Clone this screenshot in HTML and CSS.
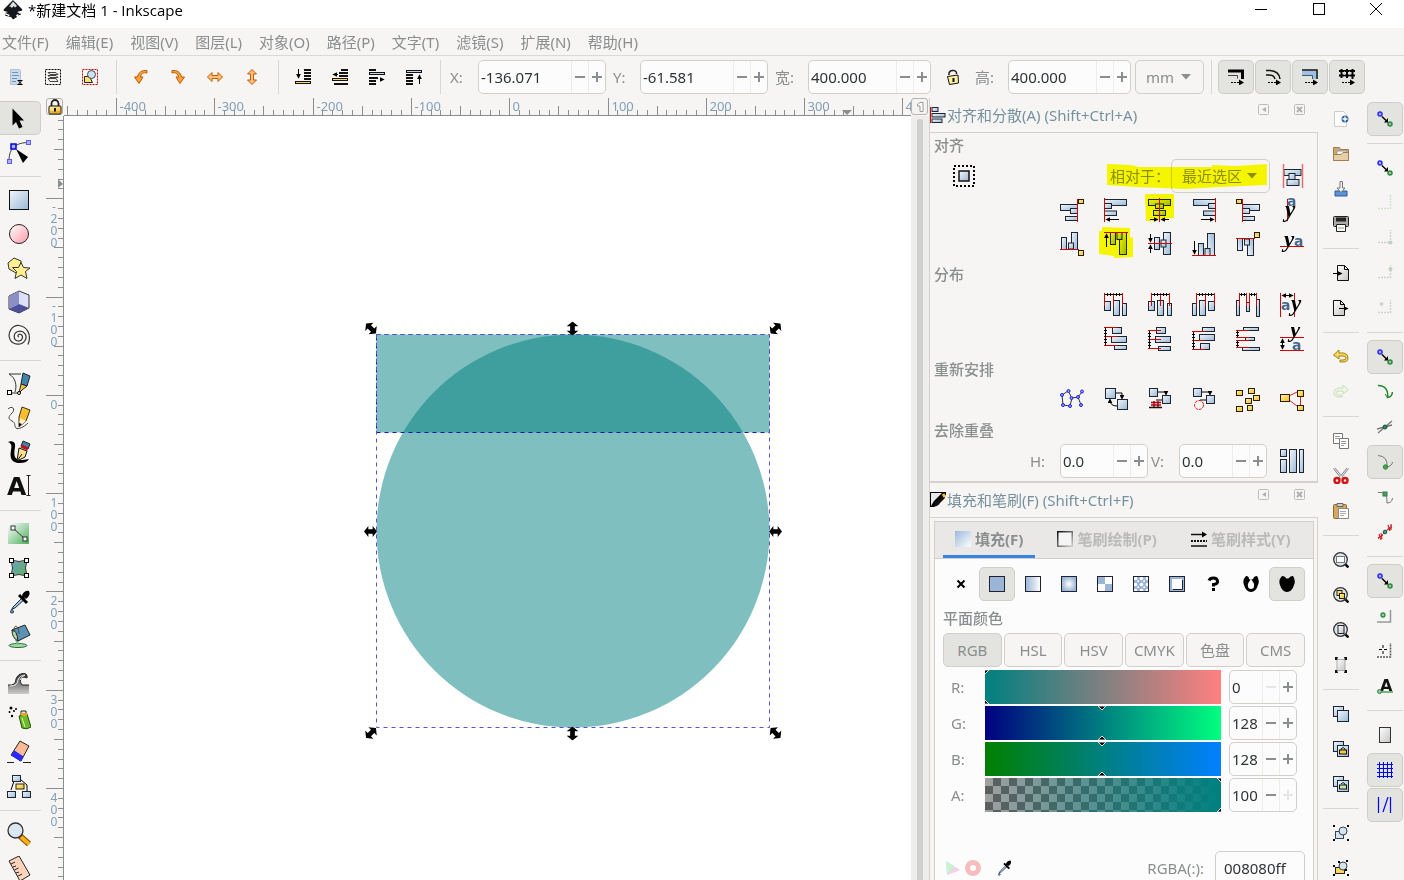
FILE: index.html
```html
<!DOCTYPE html>
<html lang="zh-CN">
<head>
<meta charset="utf-8">
<title>*新建文档 1 - Inkscape</title>
<link rel="stylesheet" href="styles.css">
</head>
<body>
<svg class="sprite" aria-hidden="true">
<defs>
<linearGradient id="gb" x1="0" y1="0" x2="1" y2="1"><stop offset="0" stop-color="#f2f7fb"/><stop offset="1" stop-color="#9ab8d6"/></linearGradient>
<linearGradient id="gp" x1="0" y1="0" x2="1" y2="1"><stop offset="0" stop-color="#fff"/><stop offset="1" stop-color="#ff9aa8"/></linearGradient>
<linearGradient id="gy" x1="0" y1="0" x2="1" y2="1"><stop offset="0" stop-color="#fff3b0"/><stop offset="1" stop-color="#f5bd1c"/></linearGradient>
<linearGradient id="gg" x1="0" y1="0" x2="1" y2="1"><stop offset="0" stop-color="#fff"/><stop offset="1" stop-color="#4cae5c"/></linearGradient>
<linearGradient id="gw" x1="0" y1="0" x2="1" y2="1"><stop offset="0" stop-color="#fff"/><stop offset="1" stop-color="#c4c4c4"/></linearGradient>
<linearGradient id="gk" x1="0" y1="0" x2="0" y2="1"><stop offset="0" stop-color="#333"/><stop offset="1" stop-color="#ccc"/></linearGradient>
<linearGradient id="gf" x1="0" y1="0" x2="1" y2="1"><stop offset="0" stop-color="#9bb9dc"/><stop offset="1" stop-color="#fdfeff"/></linearGradient>
<linearGradient id="gl" x1="0" y1="0" x2="1" y2="0"><stop offset="0" stop-color="#9ab5d6"/><stop offset="1" stop-color="#fff"/></linearGradient>
<linearGradient id="gs" x1="0" y1="0" x2="1" y2="1"><stop offset="0" stop-color="#111"/><stop offset="1" stop-color="#ccc"/></linearGradient>
<linearGradient id="gx" x1="0" y1="0" x2="1" y2="1"><stop offset="0" stop-color="#6f9cc4"/><stop offset="1" stop-color="#5fb35f"/></linearGradient>
<radialGradient id="gr"><stop offset="0" stop-color="#fff"/><stop offset="1" stop-color="#9ab5d6"/></radialGradient>
<pattern id="dots" width="6" height="6" patternUnits="userSpaceOnUse"><rect width="6" height="6" fill="#9ab5d6"/><circle cx="2.500" cy="2.500" r="1.800" fill="#fff"/><circle cx="5.500" cy="5.500" r="1.300" fill="#fff"/></pattern>
<marker id="ah" viewBox="0 0 6 6" refX="4" refY="3" markerWidth="5" markerHeight="5" orient="auto-start-reverse"><path d="M0 0 6 3 0 6z"/></marker>

<symbol id="logo" viewBox="0 0 20 20"><path d="M10 0 19 9Q20 11 17 11L14 12 17 13.500 13 15 14 17 10 19.500 8 17 5 16.500 7 15 2 13 5 12 1 11Q0 10 1 9z" fill="#15171c"/><path d="M10 1.500 14 6 12 7.500 10.500 6 9 8 7.500 6.500 6 7z" fill="#dfe3e8"/><path d="M2 15l3 1M15 15l3-1" stroke="#15171c"/></symbol>
<symbol id="xml" viewBox="0 0 16 16"><path d="M2.500.500h9l1 1v14h-10z" fill="#c9dcee" stroke="#b5c0ca"/><path d="M4 3.500h6M4 6.500h7M4 9.500h5M4 12.500h4" stroke="#6c93bb"/><path d="M10.500 12l3 3M13.500 12l-3 3M9.500 11.500h5M9.500 15.500h5" stroke="#000"/></symbol>
<symbol id="selall" viewBox="0 0 16 16"><rect x=".500" y=".500" width="15" height="15" class="n" stroke="#000" stroke-dasharray="2 1"/><path d="M3 3.500h8l2 2H5zM3 6.500h8l2 2H5zM3 9.500h8l2 3H5z" fill="#eee" stroke="#444"/></symbol>
<symbol id="desel" viewBox="0 0 16 16"><rect x=".500" y=".500" width="15" height="15" class="n" stroke="#d00000" stroke-dasharray="2 1"/><path d="M2.500 7.500h5l3 6h-8z" fill="#ffe070" stroke="#222"/><circle cx="9.500" cy="5.500" r="4" fill="#cfe0ef" stroke="#445"/></symbol>
<symbol id="rotl" viewBox="0 0 16 16"><path d="M14 1.500C9 1 5.500 3 4.500 8H1.500L6 14.500 10 8H7.500C8 5 10 3 14 4z" fill="#f9a13c" stroke="#c25a00"/></symbol>
<symbol id="fliph" viewBox="0 0 16 16"><path d="M.500 8 5 3.500V6.500h6V3.500L15.500 8 11 12.500V9.500H5v3z" fill="#ffc078" stroke="#c25a00"/></symbol>
<symbol id="low1" viewBox="0 0 16 16"><path d="M3.500 0v8" class="k" marker-end="url(#ah)"/><path d="M9 1h7M9 4h7M9 7h7M9 10h7" stroke="#111" stroke-width="2"/><rect x=".500" y="12.500" width="15" height="2" fill="#ffd95a" stroke="#111"/></symbol>
<symbol id="low2" viewBox="0 0 16 16"><path d="M6 5.500H2" class="k" marker-end="url(#ah)"/><path d="M9 1h7M7 4h9M7 7h9M2 15h14" stroke="#111" stroke-width="2"/><rect x=".500" y="9.500" width="15" height="2" fill="#ffd95a" stroke="#111"/></symbol>
<symbol id="up1" viewBox="0 0 16 16"><path d="M11 10.500h3" class="k" marker-end="url(#ah)"/><path d="M0 1h7M0 9h9M0 12h7M0 15h7" stroke="#111" stroke-width="2"/><rect x=".500" y="3.500" width="15" height="2" fill="#c4d8ea" stroke="#111"/></symbol>
<symbol id="up2" viewBox="0 0 16 16"><path d="M13.500 15V7" class="k" marker-end="url(#ah)"/><path d="M0 6h7M0 9h7M0 12h7M0 15h7" stroke="#111" stroke-width="2"/><rect x=".500" y="1.500" width="15" height="2" fill="#c4d8ea" stroke="#111"/></symbol>
<symbol id="unlock" viewBox="0 0 16 16"><path d="M4 6V4Q5 1 8.500 1.500 12 2 11.500 5" class="n" stroke="#222" stroke-width="1.500"/><path d="M2.500 7.500 13 6l.500 8-9 1.500z" fill="#fff1a0" stroke="#111"/><path d="M8.500 9v4" stroke="#111" stroke-width="2"/></symbol>
<symbol id="lock" viewBox="0 0 16 16"><path d="M4.500 7V4.500a3.500 3.500 0 0 1 7 0V7" class="n" stroke="#222" stroke-width="1.800"/><rect x="2" y="7" width="12" height="8" rx="1" fill="url(#gy)" stroke="#111"/><path d="M2 13h12" stroke="#d28b00"/><path d="M8 9v3.500" stroke="#111" stroke-width="2"/></symbol>
<symbol id="sc1" viewBox="0 0 16 16"><path d="M0 2h14.500v8" class="n" stroke="#000" stroke-width="3"/><path d="M0 6.500h9.500v3" class="n" stroke="#444"/><path d="M3 13.500h9" class="k" stroke-dasharray="2 1"/><path d="M11 10.500l5 3-5 3z"/></symbol>
<symbol id="sc2" viewBox="0 0 16 16"><path d="M1 1.500h4Q14 2 15 10M1 6h3Q9 6 10 10" class="n" stroke="#111" stroke-width="1.500"/><path d="M3 13.500h9" class="k" stroke-dasharray="2 1"/><path d="M11 10.500l5 3-5 3z"/></symbol>
<symbol id="sc3" viewBox="0 0 16 16"><path d="M0 2h14v8h-3V7H0z" fill="#9fbfe4"/><path d="M0 1h15v9" class="n" stroke="#111" stroke-width="1.500"/><path d="M0 6.500h10.500V10" class="n" stroke="#456"/><path d="M3 13.500h9" class="k" stroke-dasharray="2 1"/><path d="M11 10.500l5 3-5 3z"/></symbol>
<symbol id="sc4" viewBox="0 0 16 16"><path d="M0 1.500h16M0 6.500h16" stroke="#000" stroke-dasharray="4 1"/><path d="M2.500 0v9M8 0v9M13.500 0v10" stroke="#000" stroke-width="2"/><path d="M0 2h5M5.500 2h5M11 2h5M0 6.500h5M5.500 6.500h5M11 6.500h5" stroke="#000" stroke-width="2"/><path d="M3 13.500h9" class="k" stroke-dasharray="2 1"/><path d="M11 10.500l5 3-5 3z"/></symbol>
<symbol id="minus" viewBox="0 0 12 12"><path d="M1 6h10" class="s"/></symbol>
<symbol id="plus" viewBox="0 0 12 12"><path d="M1 6h10M6 1v10" class="s"/></symbol>
<symbol id="tri" viewBox="0 0 10 6"><path d="M0 0h10L5 5.500z" fill="currentColor"/></symbol>

<symbol id="t-sel" viewBox="0 0 24 24"><path d="M5.500 2.500v17l3.500-3.500 3 6.500 3.500-1.500-3-6.500h4.500z"/></symbol>
<symbol id="t-node" viewBox="0 0 24 24"><path d="M2 20C2 9 8 3 20 2.500" class="n" stroke="#444"/><path d="M9 9 21 17 16 23z"/><g fill="#aab4ff" stroke="#5b5bff"><rect x="19.500" y=".500" width="4" height="4"/><rect x=".500" y="19.500" width="4" height="4"/><rect x="4" y="4" width="5" height="5" stroke="#0000e0" stroke-width="1.500"/></g></symbol>
<symbol id="t-rect" viewBox="0 0 24 24"><rect x="2.500" y="2.500" width="19" height="19" fill="url(#gb)" stroke="#111"/></symbol>
<symbol id="t-circ" viewBox="0 0 24 24"><circle cx="12" cy="12" r="9.500" fill="url(#gp)" stroke="#222"/></symbol>
<symbol id="t-star" viewBox="0 0 24 24"><g fill="#ffef90" stroke="#333"><path d="M7 2 14 5V12L9 17 2 13 1 7z"/><path d="M14 6.500 16.500 11.500 23 12 18.500 15.500 20 22.500 14 19 8 22.500 9.500 15.500 5.500 11.500 11.500 11.500z"/></g></symbol>
<symbol id="t-box" viewBox="0 0 24 24"><path d="M2 6 12 1 22 5 22 18 12 23 2 19z" fill="#dedff8" stroke="#333"/><path d="M2 6 12 1V14L2 19z" fill="#8c8fc4"/><path d="M2 19 12 14 22 18 12 23z" fill="#4c4f9c"/></symbol>
<symbol id="t-spir" viewBox="0 0 24 24"><path d="M12 13c-2 0-1-4 2-2.500 3 2 1 7-3 6.500-5-1-5-8 0-9.500 6-1.500 10 4 7 9-3 5-12 5-15-1C0 9 5 1 12 1.500c8 1 13 9 9 19" class="n" stroke="#333" stroke-width="1.200"/></symbol>
<symbol id="t-pen" viewBox="0 0 24 24"><path d="M2 2h12M2 2c7 4 8 12 6 18M4 21h9" class="n" stroke="#333"/><path d="M16 1 23 4 20 14 14 12z" fill="#3f86ad" stroke="#222"/><path d="M14 12 20 14 15 18 12 21z" fill="#f7c440" stroke="#222"/><rect x=".500" y="18.500" width="4" height="4" fill="#fff" stroke="#000"/><circle cx="12" cy="21" r="1.500" fill="#fff" stroke="#000"/></symbol>
<symbol id="t-pencil" viewBox="0 0 24 24"><path d="M1 3C5-1 9 3 5 7S1 13 5 15s2 5 4 7 8-1 12-5" class="n" stroke="#444"/><path d="M15 1 23 4 19 15 12 21 12 11z" fill="#ffbc2b" stroke="#332"/><path d="M13 12l6 3-7 6z" fill="#fff0c8"/><path d="M12 17l3 1-3 3z"/></symbol>
<symbol id="t-call" viewBox="0 0 24 24"><path d="M1 2C5 0 9 2 8 7 7 14 6 20 15 20c3 0 5-1 7-1-2 3-5 4-9 4C3 23 3 16 4 10 5 5 4 3 1 2z"/><path d="M16 1 23 4 21 9 14 6z" fill="#4383aa" stroke="#222"/><path d="M14 6 21 9" stroke="#c01020" stroke-width="3"/><path d="M12 8 20 11 18 17 10 21z" fill="#ffe28a" stroke="#111"/><path d="M10 21l5-7" stroke="#111"/></symbol>
<symbol id="t-text" viewBox="0 0 24 24"><text x="0" y="21" class="glyphA">A</text><path d="M19.500 1.500h4M19.500 21.500h4M21.500 2v19" class="n" stroke="#222"/></symbol>
<symbol id="t-grad" viewBox="0 0 24 24"><rect x="1" y="1" width="21" height="21" fill="url(#gg)"/><path d="M6 6 18 17" stroke="#333"/><g fill="#fff" stroke="#333"><rect x="4" y="4" width="4" height="4"/><rect x="16" y="15" width="4" height="4"/></g></symbol>
<symbol id="t-mesh" viewBox="0 0 24 24"><path d="M4 4Q12 7 20 4 17 12 20 20 12 17 4 20 7 12 4 4z" fill="url(#gx)" stroke="#333"/><g fill="#fff" stroke="#000"><rect x="2.500" y="2.500" width="4" height="4"/><rect x="17.500" y="2.500" width="4" height="4"/><rect x="2.500" y="17.500" width="4" height="4"/><rect x="17.500" y="17.500" width="4" height="4"/></g></symbol>
<symbol id="t-drop" viewBox="0 0 24 24"><path d="M16 7 6 17 5 19 8 18 18 9z" fill="#9cc4e6" stroke="#234"/><path d="M12 5 20 13M15 8 20 3" stroke="#000" stroke-width="3"/><path d="M15 5Q18 0 22 1 24 5 19 9z"/><path d="M5 19q-3 4 0 4t0-4" fill="#6fa5d6" stroke="#235"/></symbol>
<symbol id="t-buck" viewBox="0 0 24 24"><ellipse cx="11" cy="21.500" rx="9" ry="2" fill="#a7dba9" stroke="#2a6a3a"/><path d="M8 16Q9 19 10 21h2L11 14z" fill="#7ebf8a"/><path d="M5 6 18 1 23 11 11 17z" fill="#5d92b5" stroke="#222"/><path d="M5 6Q10 6 11 17 5 14 5 6z" fill="#a7dba9" stroke="#222"/><path d="M7 8C6 0 12 0 12 10" class="n" stroke="#444"/></symbol>
<symbol id="t-tweak" viewBox="0 0 24 24"><path d="M1 13Q9 14 9 7 11 1 18 1.500 21 3 20 6 17 4 14 6 12 10 15 13H22V22H1z" fill="url(#gk)"/><path d="M1 13Q9 14 9 7 11 1 18 1.500 21 3 20 6 17 4 14 6 12 10 15 13H22" class="n" stroke="#222"/><path d="M3 14Q11 14 11 8 13 3 18 3 14 5 13 8" class="n" stroke="#eee"/></symbol>
<symbol id="t-spray" viewBox="0 0 24 24"><g><circle cx="4" cy="2" r="1.500"/><circle cx="2.500" cy="6" r="1"/><circle cx="7" cy="5" r="1"/><circle cx="5" cy="10" r="1.200"/><circle cx="9" cy="3" r="1"/></g><path d="M14 5h5v5h-5z" fill="#eee" stroke="#222"/><path d="M12 10 20 8 24 21Q20 24 15 22z" fill="#6cbb2b" stroke="#274d12"/><path d="M14 8l6 1" stroke="#e4a820" stroke-width="3"/><path d="M15 12l3 9" stroke="#d7ff9d"/></symbol>
<symbol id="t-eras" viewBox="0 0 24 24"><path d="M13 1 22 6 14 21 4 15z" fill="#f9bb96" stroke="#222"/><path d="M7.500 10.500 16.500 16.500 13.500 21.500 4 15z" fill="#2828ff"/><path d="M0 22.500h7M16 22.500h8" stroke="#222"/></symbol>
<symbol id="t-conn" viewBox="0 0 24 24"><path d="M7 7 4 16M13 5l7 6v6" class="k"/><g class="b"><rect x="5.500" y="1.500" width="8" height="6"/><rect x=".500" y="17.500" width="8" height="6"/><rect x="15.500" y="17.500" width="8" height="6"/></g><rect x="9" y="10" width="8" height="5" class="y"/></symbol>
<symbol id="t-zoom" viewBox="0 0 24 24"><path d="M13 14 22 22" stroke="#7b4b00" stroke-width="6"/><path d="M14 15 22 22" stroke="#ffae1a" stroke-width="4"/><circle cx="8.500" cy="8.500" r="7.500" fill="#dbe8f2" stroke="#333" stroke-width="1.300"/></symbol>
<symbol id="t-meas" viewBox="0 0 24 24"><path d="M2 5 12 0 23 19 13 25z" fill="#ffd3bc" stroke="#222"/><path d="M4 8l4-2M6 11l3-1M7.500 14l4-2M9 17l3-1M11 20l4-2" stroke="#222"/></symbol>

<symbol id="al0" viewBox="0 0 24 24"><rect x="2" y="2" width="20" height="20" class="n" stroke="#000" stroke-width="2" stroke-dasharray="2 2"/><rect x="7" y="7" width="10" height="10" fill="url(#gb)" stroke="#111" stroke-width="1.500"/></symbol>
<symbol id="al00" viewBox="0 0 24 24"><g class="b"><rect x="4" y="5.500" width="17" height="6"/><rect x="9" y="9.500" width="6" height="7"/><rect x="7" y="15.500" width="12" height="6"/></g><path d="M3.500 0v24M22.500 0v24" stroke="#e07070" stroke-width="1.500"/></symbol>
<symbol id="al1" viewBox="0 0 24 24"><g class="b"><rect x=".500" y="6.500" width="17" height="6"/><rect x="10.500" y="10.500" width="7" height="5"/><rect x="5.500" y="18.500" width="12" height="4"/></g><path d="M17.500 1v23" class="r"/><rect x="18.500" y="1.500" width="5" height="4" class="y"/></symbol>
<symbol id="al2" viewBox="0 0 24 24"><g class="b"><rect x=".500" y="1.500" width="22" height="6"/><rect x=".500" y="5.500" width="7" height="5"/><rect x=".500" y="13" width="12" height="4.500"/></g><path d="M.500 0v24" class="r"/><path d="M15 21.500H3" class="k" marker-end="url(#ah)"/></symbol>
<symbol id="al3" viewBox="0 0 24 24"><g class="b"><rect x=".500" y="1.500" width="22" height="6"/><rect x="7.500" y="6" width="8" height="4.500"/><rect x="5.500" y="12.500" width="12" height="5"/></g><path d="M11.500 0v24" class="r"/><path d="M21 21.500h-7" class="k" marker-end="url(#ah)"/><path d="M2 21.500h7" class="k" marker-end="url(#ah)"/></symbol>
<symbol id="av1" viewBox="0 0 24 24"><g class="b"><rect x="1.500" y="5.500" width="5" height="12"/><rect x="11.500" y=".500" width="6" height="17"/><rect x="8.500" y="11" width="5" height="6"/></g><path d="M0 17.500h19" class="r"/><rect x="18.500" y="18.500" width="5" height="5" class="y"/></symbol>
<symbol id="av2" viewBox="0 0 24 24"><g class="b"><rect x="6.500" y=".500" width="5" height="12"/><rect x="15.500" y=".500" width="7" height="22"/><rect x="13" y=".500" width="5" height="7"/></g><path d="M0 .500h24" class="r"/><path d="M2.500 15V3" class="k" marker-end="url(#ah)"/></symbol>
<symbol id="av3" viewBox="0 0 24 24"><g class="b"><rect x="6.500" y="5.500" width="5" height="12"/><rect x="15.500" y=".500" width="7" height="22"/><rect x="13" y="8" width="5" height="7"/></g><path d="M0 11.500h24" class="r"/><path d="M2.500 2v7" class="k" marker-end="url(#ah)"/><path d="M2.500 21v-7" class="k" marker-end="url(#ah)"/></symbol>
<symbol id="tx1" viewBox="0 0 24 24"><path d="M7.500 1v22" class="r"/><text x="7" y="8" class="ga">a</text><text x="5" y="19" class="gy">y</text></symbol>
<symbol id="tx2" viewBox="0 0 24 24"><path d="M0 14.500h24" class="r"/><text x="4" y="15" class="gy">y</text><text x="14" y="14" class="ga">a</text></symbol>
<symbol id="tx3" viewBox="0 0 24 24"><path d="M.500 0v24M14.500 0v24" class="r"/><path d="M3 2.500h9" class="k" marker-start="url(#ah)" marker-end="url(#ah)"/><text x="1" y="17" class="ga">a</text><text x="11" y="18" class="gy">y</text></symbol>
<symbol id="tx4" viewBox="0 0 24 24"><path d="M0 10.500h24M0 23.500h24" class="r"/><path d="M2.500 13v8" class="k" marker-start="url(#ah)" marker-end="url(#ah)"/><text x="10" y="10" class="gy">y</text><text x="12" y="23" class="ga">a</text></symbol>
<symbol id="di1" viewBox="0 0 24 24"><g class="b"><rect x=".500" y="8.500" width="6" height="9"/><rect x="9.500" y="7.500" width="6" height="15"/><rect x="18.500" y="10.500" width="4" height="12"/></g><path d="M.500 0v13M9.500 0v13M18.500 0v13" class="r"/><path d="M1 1.500h17M3.500 0v3M6.500 0v3M12.500 0v3M15.500 0v3" class="k"/></symbol>
<symbol id="di2" viewBox="0 0 24 24"><g class="b"><rect x=".500" y="8.500" width="6" height="9"/><rect x="9.500" y="7.500" width="6" height="15"/><rect x="19.500" y="10.500" width="4" height="12"/></g><path d="M3.500 0v13M12.500 0v13M21.500 0v13" class="r"/><path d="M4 1.500h17M6.500 0v3M9.500 0v3M15.500 0v3M18.500 0v3" class="k"/></symbol>
<symbol id="di3" viewBox="0 0 24 24"><g class="b"><rect x=".500" y="10.500" width="4" height="12"/><rect x="7.500" y="7.500" width="6" height="15"/><rect x="16.500" y="8.500" width="6" height="9"/></g><path d="M4.500 0v13M13.500 0v13M22.500 0v13" class="r"/><path d="M5 1.500h17M7.500 0v3M10.500 0v3M16.500 0v3M19.500 0v3" class="k"/></symbol>
<symbol id="di4" viewBox="0 0 24 24"><g class="b"><rect x=".500" y="7.500" width="3" height="15"/><rect x="10.500" y="9.500" width="3" height="9"/><rect x="20.500" y="6.500" width="3" height="17"/></g><path d="M3.500 0v13M10.500 0v13M13.500 0v13M20.500 0v13" class="r"/><path d="M4 1.500h6M14 1.500h6M5.500 0v3M8.500 0v3M15.500 0v3M18.500 0v3" class="k"/></symbol>
<symbol id="re1" viewBox="0 0 24 24"><path d="M2 7 8 3 12 10 10 18 3 17zM12 10l6-1 4-5M18 9l3 8" class="n" stroke="#333"/><g fill="#8ea0ff" stroke="#2020f0"><circle cx="2" cy="7" r="1.500"/><circle cx="8.500" cy="3" r="1.500"/><circle cx="11.500" cy="10" r="1.500"/><circle cx="10" cy="18" r="1.500"/><circle cx="3" cy="17" r="1.500"/><circle cx="18" cy="9" r="1.500"/><circle cx="22" cy="3.500" r="1.500"/><circle cx="21" cy="17" r="1.500"/></g></symbol>
<symbol id="re2" viewBox="0 0 24 24"><g class="b"><rect x="1.500" y=".500" width="10" height="10"/><rect x="13.500" y="11.500" width="10" height="10"/></g><path d="M12 5h6v5" class="k" marker-end="url(#ah)"/><path d="M13 18Q6 18 6 12" class="k" marker-end="url(#ah)"/></symbol>
<symbol id="re3" viewBox="0 0 24 24"><g class="b"><rect x="1.500" y=".500" width="8" height="8"/><rect x="14.500" y="7.500" width="8" height="8"/></g><path d="M10 4h8v2" class="k" marker-end="url(#ah)"/><path d="M14 12H8" class="k"/><path d="M3 14.500h10M3 17h10M6 13v7M10 13v7" stroke="#b00010" stroke-width="1.500"/><path d="M1 19.500h13" stroke="#111" stroke-width="1.500"/></symbol>
<symbol id="re4" viewBox="0 0 24 24"><g class="b"><rect x="1.500" y=".500" width="8" height="8"/><rect x="14.500" y="7.500" width="8" height="8"/></g><path d="M10 4h8v2" class="k" marker-end="url(#ah)"/><path d="M14 12H8" class="k"/><circle cx="7" cy="17" r="4.500" class="n" stroke="#e01010" stroke-dasharray="3 1"/></symbol>
<symbol id="re5" viewBox="0 0 24 24"><g class="y"><rect x="12.500" y=".500" width="6" height="5"/><rect x=".500" y="2.500" width="6" height="5"/><rect x="17.500" y="7.500" width="6" height="5"/><rect x="9.500" y="10.500" width="6" height="5"/><rect x="11.500" y="17.500" width="5" height="5"/><rect x=".500" y="18.500" width="6" height="5"/></g></symbol>
<symbol id="re6" viewBox="0 0 24 24"><path d="M9 8l8-4M9 12l8 6M20.500 9v8" stroke="#e02020"/><g class="y"><rect x=".500" y="6.500" width="9" height="7"/><rect x="17.500" y="2.500" width="6" height="6"/><rect x="17.500" y="17.500" width="6" height="5"/></g></symbol>
<symbol id="ovl" viewBox="0 0 24 24"><g class="b"><rect x=".500" y=".500" width="6" height="7"/><rect x=".500" y="10.500" width="6" height="13"/><rect x="9.500" y=".500" width="7" height="23"/><rect x="19.500" y=".500" width="4" height="23"/></g></symbol>
<symbol id="h-al" viewBox="0 0 16 16"><path d="M.500 0v16" class="r"/><g class="b"><rect x="2" y=".500" width="6" height="4"/><rect x="2" y="6.500" width="13" height="3.500"/><rect x="2" y="12" width="10" height="3.500"/></g></symbol>
<symbol id="h-fi" viewBox="0 0 16 16"><path d="M0 0h16v3L4 15H0z"/><path d="M1 1h11L4 9 1 14z" fill="#e8e8e8"/><path d="M5 12Q5 8 9 8L14 3 15 6 10 11Q8 15 1 15z" fill="#111"/><path d="M13 2l2 3" stroke="#ffbe1e" stroke-width="3"/></symbol>
<symbol id="dk1" viewBox="0 0 12 12"><rect x=".500" y=".500" width="10" height="10" rx="1" class="n" stroke="#bcbcbc"/><path d="M8 3v5L4 5.500z" fill="#b0b0b0"/></symbol>
<symbol id="dk2" viewBox="0 0 12 12"><rect x=".500" y=".500" width="10" height="10" rx="1" class="n" stroke="#bcbcbc"/><path d="M3 3l5 5M8 3 3 8" stroke="#b0b0b0" stroke-width="2"/></symbol>
<symbol id="tb1" viewBox="0 0 16 16"><rect width="16" height="16" fill="url(#gf)"/></symbol>
<symbol id="tb2" viewBox="0 0 16 16"><rect x=".750" y=".750" width="14.500" height="14.500" fill="#f4f4f4" stroke="url(#gs)" stroke-width="1.500"/></symbol>
<symbol id="tb3" viewBox="0 0 16 16"><path d="M0 3.500h12" stroke="#111" stroke-width="1.500"/><path d="M11 .500l5 3-5 3z"/><path d="M0 10h16" stroke="#111" stroke-width="2" stroke-dasharray="2 1"/><path d="M0 15h16" stroke="#111" stroke-width="1.500"/></symbol>
<symbol id="f0" viewBox="0 0 16 16"><path d="M4.500 4.500l7 7M11.500 4.500l-7 7" stroke="#000" stroke-width="2"/></symbol>
<symbol id="f1" viewBox="0 0 16 16"><rect x=".500" y=".500" width="15" height="15" fill="#9ab5d6" stroke="#223"/></symbol>
<symbol id="f2" viewBox="0 0 16 16"><rect x=".500" y=".500" width="15" height="15" fill="url(#gl)" stroke="#223"/></symbol>
<symbol id="f3" viewBox="0 0 16 16"><rect x=".500" y=".500" width="15" height="15" fill="url(#gr)" stroke="#223"/></symbol>
<symbol id="f4" viewBox="0 0 16 16"><rect x=".500" y=".500" width="15" height="15" fill="#fff" stroke="#223"/><path d="M1 1h7v7H1zM8 8h7v7H8z" fill="#9ab5d6"/></symbol>
<symbol id="f5" viewBox="0 0 16 16"><rect x=".500" y=".500" width="15" height="15" fill="url(#dots)" stroke="#223"/></symbol>
<symbol id="f6" viewBox="0 0 16 16"><rect x=".500" y=".500" width="15" height="15" fill="#9ab5d6" stroke="#223"/><rect x="3" y="3" width="10" height="10" fill="#fff"/><path d="M4 13.500h9.500V4" class="n" stroke="#223"/></symbol>
<symbol id="f7" viewBox="0 0 16 16"><path d="M4 4.500Q5 2 8.500 2T12.500 5 8.500 8.500V10.500" class="n" stroke="#000" stroke-width="3"/><path d="M7 12h3v3H7z"/></symbol>
<symbol id="f8" viewBox="0 0 16 16"><path fill-rule="evenodd" d="M3 0Q6 0 6 3 8 4 10 3 11 0 14 0q3 4 1 9-2 7-7 7T1 9Q-1 4 3 0zM8 3Q4 8 5 10q0 3 3 3t3-3Q12 8 8 3z"/></symbol>
<symbol id="f9" viewBox="0 0 16 16"><path d="M3 0Q6 0 7 2q1 1 3 0Q11 0 14 0q3 4 1 9-2 7-7 7T1 9Q-1 4 3 0z"/></symbol>
<symbol id="c1" viewBox="0 0 16 16"><path d="M1 1l14 9L2 15z" fill="#e0d8f4"/><path d="M1 1l8 5-7 8z" fill="#c8f4d0"/><path d="M15 10 2 15l6-6z" fill="#fbd0dc"/></symbol>
<symbol id="c2" viewBox="0 0 16 16"><circle cx="8" cy="8" r="5.500" fill="#fff" stroke="#f9bcbc" stroke-width="5"/></symbol>

<symbol id="m-new" viewBox="0 0 16 16"><path d="M1.500.500h9l3 3v12h-12z" fill="#fff" stroke="#ccc"/><circle cx="12" cy="8" r="3.500" fill="#3465a4"/><path d="M9.500 8h5M12 5.500v5" stroke="#fff" stroke-width="1.300"/></symbol>
<symbol id="m-open" viewBox="0 0 16 16"><path d="M.500 1.500h6l1 2h8v11H.500z" fill="#c9a777" stroke="#a17e50"/><path d="M4 5h10v6H4z" fill="#fff" stroke="#999"/><path d="M.500 8.500H8l2-2h5.500v8H.500z" fill="#e6cfa8" stroke="#a17e50"/></symbol>
<symbol id="m-save" viewBox="0 0 16 16"><path d="M2 10h12v5H2z" fill="#5b93d6" stroke="#2c5a9c"/><path d="M7 .500h2.500V7H12l-4 4.500L4 7h3z" fill="#f4f4f4" stroke="#777"/></symbol>
<symbol id="m-prn" viewBox="0 0 16 16"><rect x=".500" y=".500" width="15" height="10" rx="1" fill="#aaa" stroke="#222"/><path d="M3 1.500h10v4H3z" fill="#222"/><path d="M3.500 8.500h9v7h-9z" fill="#fff" stroke="#222"/><path d="M5 12h6" stroke="#7aaa60"/></symbol>
<symbol id="m-imp" viewBox="0 0 16 16"><path d="M4.500.500h7l4 4v11h-11z" fill="url(#gw)" stroke="#111"/><path d="M11.500.500v4h4" class="k"/><path d="M0 8.500h8" class="k" marker-end="url(#ah)"/></symbol>
<symbol id="m-exp" viewBox="0 0 16 16"><path d="M.500.500h7l4 4v11H.500z" fill="url(#gw)" stroke="#111"/><path d="M7.500.500v4h4" class="k"/><path d="M6 8.500h8" class="k" marker-end="url(#ah)"/></symbol>
<symbol id="m-undo" viewBox="0 0 16 16"><path d="M.500 6 6 1v3h5q4 1 4 5t-5 4H7v-2h3q3 0 3-2t-3-2H6v3z" fill="#f2d860" stroke="#a8820b"/></symbol>
<symbol id="m-redo" viewBox="0 0 16 16"><path d="M15.500 6 10 1v3H5Q1 5 1 9t5 4h3v-2H6Q3 11 3 9t3-2h4v3z" fill="#eef6e2" stroke="#c9dfb8"/></symbol>
<symbol id="m-copy" viewBox="0 0 16 16"><g fill="#fff" stroke="#777"><path d="M.500.500h9v10h-9z"/><path d="M6.500 5.500h9v10h-9z"/></g><path d="M2 3.500h5M2 5.500h4M8 8.500h5M8 10.500h5M8 12.500h3" stroke="#999"/></symbol>
<symbol id="m-cut" viewBox="0 0 16 16"><path d="M1 0l8 10M15 0 7 10" stroke="#888" stroke-width="2.500"/><path d="M1 0l8 10M15 0 7 10" stroke="#eee"/><g class="n" stroke="#d01818" stroke-width="2.500"><circle cx="4" cy="12.500" r="2.500"/><circle cx="12" cy="12.500" r="2.500"/></g></symbol>
<symbol id="m-paste" viewBox="0 0 16 16"><rect x=".500" y="1.500" width="13" height="14" rx="1" fill="#d4a860" stroke="#8c6a30"/><path d="M4 .500h6v3H4z" fill="#ccc" stroke="#666"/><path d="M5.500 5.500h10v10h-10z" fill="#fff" stroke="#888"/><path d="M7 8.500h6M7 10.500h6M7 12.500h4" stroke="#aaa"/></symbol>
<symbol id="mag" viewBox="0 0 16 16"><path d="M12 12l3.500 3.500" stroke="#111" stroke-width="2.500"/><circle cx="7.500" cy="7.500" r="6.800" fill="#d9e7f0" stroke="#333" stroke-width="1.300"/></symbol>
<symbol id="m-z1" viewBox="0 0 16 16"><use href="#mag" width="16" height="16"/><rect x="3.500" y="4.500" width="8" height="6" fill="#fff" stroke="#000" stroke-dasharray="1 1"/></symbol>
<symbol id="m-z2" viewBox="0 0 16 16"><use href="#mag" width="16" height="16"/><g class="y"><rect x="4" y="3.500" width="5" height="5"/><rect x="6.500" y="6.500" width="5" height="5"/></g></symbol>
<symbol id="m-z3" viewBox="0 0 16 16"><use href="#mag" width="16" height="16"/><rect x="5" y="3.500" width="6" height="8" fill="url(#gw)" stroke="#222"/></symbol>
<symbol id="m-z4" viewBox="0 0 16 16"><rect x="4" y="2.500" width="8" height="11" fill="url(#gw)" stroke="#aaa"/><path d="M2 0h3L4 3 2 3zM14 0h-3l1 3h2zM2 16h3l-1-3H2zM14 16h-3l1-3h2z" fill="#111"/></symbol>
<symbol id="m-dup" viewBox="0 0 16 16"><g class="b"><rect x=".500" y=".500" width="10" height="10"/><rect x="4.500" y="4.500" width="11" height="11"/></g></symbol>
<symbol id="m-cl" viewBox="0 0 16 16"><use href="#m-dup" width="16" height="16"/><path d="M8 9V8q2-3 4 0v1" class="n" stroke="#111"/><rect x="6.500" y="9" width="7" height="4" fill="#ffc92e" stroke="#111"/></symbol>
<symbol id="m-uc" viewBox="0 0 16 16"><use href="#m-dup" width="16" height="16"/><path d="M8 8q2-3 4 0v1" class="n" stroke="#111"/><rect x="6.500" y="9" width="7" height="4" fill="#c9e8a8" stroke="#111"/></symbol>
<symbol id="m-gr" viewBox="0 0 16 16"><rect x="2.500" y="6.500" width="8" height="7" fill="#d6e4f0" stroke="#345"/><circle cx="10" cy="6" r="4" fill="#d6e4f0" stroke="#345"/><path d="M0 0h2v2H0zM14 0h2v2h-2zM0 14h2v2H0zM14 14h2v2h-2z"/></symbol>
<symbol id="m-ug" viewBox="0 0 16 16"><rect x="2.500" y="7.500" width="9" height="6" fill="#ffd75a" stroke="#222"/><circle cx="10" cy="6" r="4" fill="#d6e4f0" stroke="#345"/><path d="M0 5h2v2H0zM5 1h2v2H5zM13 0h2v2h-2zM0 14h2v2H0zM14 14h2v2h-2zM12 9h2v2h-2z"/></symbol>

<symbol id="s-main" viewBox="0 0 16 16"><circle cx="3" cy="3" r="2" fill="#aab4ff" stroke="#2a2af5" stroke-width="1.500"/><circle cx="13" cy="13" r="2" fill="#9bbcb0" stroke="#2f8a3c" stroke-width="1.500"/><path d="M5 5.500l4 4" class="n" stroke="#000" stroke-width="1.500"/><path d="M11 11.500H7L11 7z"/></symbol>
<symbol id="s-b1" viewBox="0 0 16 16"><path d="M1 13.500h12.500V0" class="n" stroke="#cfe3cd" stroke-width="1.500" stroke-dasharray="2 1"/></symbol>
<symbol id="s-b2" viewBox="0 0 16 16"><path d="M1 12.500h12.500V0" class="n" stroke="#cdd2cd" stroke-width="1.500" stroke-dasharray="2 1"/><circle cx="13.500" cy="12.500" r="2" fill="#b9d4c0"/></symbol>
<symbol id="s-b3" viewBox="0 0 16 16"><path d="M1 12.500h12.500V0" class="n" stroke="#cdd2cd" stroke-width="1.500" stroke-dasharray="2 1"/><circle cx="13.500" cy="4" r="2" fill="#b9d4c0"/></symbol>
<symbol id="s-b4" viewBox="0 0 16 16"><path d="M1 12.500h12.500V0" class="n" stroke="#cdd2cd" stroke-width="1.500" stroke-dasharray="2 1"/><circle cx="4.500" cy="4" r="2" fill="#c6dccb"/></symbol>
<symbol id="s-p" viewBox="0 0 16 16"><path d="M1 1.500Q12 2 10.500 13.500 15 13 15.500 8" class="n" stroke="#1d8a25" stroke-width="1.500"/><path d="M8 10l3 4" stroke="#1d8a25"/></symbol>
<symbol id="s-x" viewBox="0 0 16 16"><path d="M1 14 15 2M0 10l15-4" stroke="#777" stroke-width="1.300"/><circle cx="8" cy="8" r="2" fill="#2f8a3c" stroke="#155"/></symbol>
<symbol id="s-c" viewBox="0 0 16 16"><path d="M1 1.500Q11 2 10 13 15 12 15.500 8" class="n" stroke="#777"/><circle cx="8.500" cy="13" r="2.200" fill="#49a055" stroke="#2f8a3c"/></symbol>
<symbol id="s-s" viewBox="0 0 16 16"><path d="M1 3.500Q11 2 10 14 15 14 15.500 9" class="n" stroke="#777"/><rect x="6" y="3" width="4" height="4" fill="#49a055" stroke="#2f7a5c"/></symbol>
<symbol id="s-m" viewBox="0 0 16 16"><path d="M1 15 15 1" stroke="#777"/><path d="M2 10l2 6M4 9l1 6M11 1l2 6M14 0v6M1 14l5-3M10 6l5-3" stroke="#d02020" stroke-width="1.200"/><circle cx="8" cy="8" r="1.800" fill="#49a055" stroke="#155"/></symbol>
<symbol id="s-o" viewBox="0 0 16 16"><path d="M0 14h13.500V2" class="n" stroke="#999" stroke-width="1.500"/><circle cx="6" cy="7" r="2" fill="#9c9" stroke="#2f8a3c" stroke-width="1.300"/></symbol>
<symbol id="s-r" viewBox="0 0 16 16"><path d="M0 14h13.500V0" class="n" stroke="#555" stroke-width="1.500" stroke-dasharray="2 1"/><path d="M2 6.500h3M7 6.500h3M6 2v3M6 8v3" stroke="#000"/></symbol>
<symbol id="s-t" viewBox="0 0 16 16"><path d="M2 14h14" stroke="#49a055" stroke-width="1.500"/><text x="3" y="13" class="glyphS">A</text><circle cx="2.500" cy="13.500" r="2" fill="#9bb" stroke="#2f8a3c"/></symbol>
<symbol id="s-pg" viewBox="0 0 16 16"><rect x="2.500" y=".500" width="11" height="15" fill="url(#gw)" stroke="#333"/></symbol>
<symbol id="s-g" viewBox="0 0 16 16"><path d="M0 2.500h16M0 6.500h16M0 10.500h16M0 14.500h16M2.500 0v16M6.500 0v16M10.500 0v16M14.500 0v16" class="n" stroke="#0000ff"/></symbol>
<symbol id="s-l" viewBox="0 0 16 16"><path d="M1.500 0v16M13.500 0v16M6 15 11 0" class="n" stroke="#0000ff" stroke-width="1.200"/></symbol>
<symbol id="arr" viewBox="0 0 12 12"><path d="M0 6 4 1v3h4V1l4 5-4 5V8H4v3z"/></symbol>
</defs>
</svg>

<header class="titlebar">
  <div class="title"><svg class="i20"><use href="#logo"/></svg><h1>*新建文档 1 - Inkscape</h1></div>
  <div class="wm">
    <button aria-label="最小化"><svg class="i12"><path d="M0 6.500h12" class="k"/></svg></button>
    <button aria-label="最大化"><svg class="i12"><rect x=".500" y=".500" width="11" height="11" class="k"/></svg></button>
    <button aria-label="关闭"><svg class="i12"><path d="M0 0l12 12M12 0 0 12" class="k"/></svg></button>
  </div>
</header>
<nav class="menubar">
  <button>文件(F)</button><button>编辑(E)</button><button>视图(V)</button><button>图层(L)</button><button>对象(O)</button><button>路径(P)</button><button>文字(T)</button><button>滤镜(S)</button><button>扩展(N)</button><button>帮助(H)</button>
</nav>
<div class="toolbar">
  <button class="tb" aria-label="XML"><svg class="i16"><use href="#xml"/></svg></button>
  <button class="tb" aria-label="全选"><svg class="i16"><use href="#selall"/></svg></button>
  <button class="tb" aria-label="取消选择"><svg class="i16"><use href="#desel"/></svg></button>
  <i class="vsep"></i>
  <button class="tb" aria-label="逆时针旋转"><svg class="i16"><use href="#rotl"/></svg></button>
  <button class="tb" aria-label="顺时针旋转"><svg class="i16 mx"><use href="#rotl"/></svg></button>
  <button class="tb" aria-label="水平翻转"><svg class="i16"><use href="#fliph"/></svg></button>
  <button class="tb" aria-label="垂直翻转"><svg class="i16 rot"><use href="#fliph"/></svg></button>
  <i class="vsep"></i>
  <button class="tb" aria-label="置底"><svg class="i16"><use href="#low1"/></svg></button>
  <button class="tb" aria-label="下降"><svg class="i16"><use href="#low2"/></svg></button>
  <button class="tb" aria-label="上升"><svg class="i16"><use href="#up1"/></svg></button>
  <button class="tb" aria-label="置顶"><svg class="i16"><use href="#up2"/></svg></button>
  <i class="vsep"></i>
  <label class="fl" for="px">X:</label>
  <span class="spin w128"><input id="px" value="-136.071"><button aria-label="减"><svg class="i12"><use href="#minus"/></svg></button><button aria-label="加"><svg class="i12"><use href="#plus"/></svg></button></span>
  <label class="fl" for="py">Y:</label>
  <span class="spin w128"><input id="py" value="-61.581"><button aria-label="减"><svg class="i12"><use href="#minus"/></svg></button><button aria-label="加"><svg class="i12"><use href="#plus"/></svg></button></span>
  <label class="fl wide" for="pw">宽:</label>
  <span class="spin w123"><input id="pw" value="400.000"><button aria-label="减"><svg class="i12"><use href="#minus"/></svg></button><button aria-label="加"><svg class="i12"><use href="#plus"/></svg></button></span>
  <button class="tb lk" aria-label="锁定比例"><svg class="i16"><use href="#unlock"/></svg></button>
  <label class="fl wide" for="ph">高:</label>
  <span class="spin w123"><input id="ph" value="400.000"><button aria-label="减"><svg class="i12"><use href="#minus"/></svg></button><button aria-label="加"><svg class="i12"><use href="#plus"/></svg></button></span>
  <span class="combo unit"><select aria-label="单位"><option>mm</option></select><svg class="tri"><use href="#tri"/></svg></span>
  <i class="vsep"></i>
  <button class="tb on" aria-label="缩放描边"><svg class="i16"><use href="#sc1"/></svg></button>
  <button class="tb on" aria-label="缩放圆角"><svg class="i16"><use href="#sc2"/></svg></button>
  <button class="tb on" aria-label="移动渐变"><svg class="i16"><use href="#sc3"/></svg></button>
  <button class="tb on" aria-label="移动图案"><svg class="i16"><use href="#sc4"/></svg></button>
</div>

<main class="work">
  <aside class="tools">
    <button class="on" aria-label="选择"><svg class="i24"><use href="#t-sel"/></svg></button>
    <button aria-label="节点"><svg class="i24"><use href="#t-node"/></svg></button>
    <i class="hsep"></i>
    <button aria-label="矩形"><svg class="i24"><use href="#t-rect"/></svg></button>
    <button aria-label="圆形"><svg class="i24"><use href="#t-circ"/></svg></button>
    <button aria-label="星形"><svg class="i24"><use href="#t-star"/></svg></button>
    <button aria-label="立方体"><svg class="i24"><use href="#t-box"/></svg></button>
    <button aria-label="螺旋"><svg class="i24"><use href="#t-spir"/></svg></button>
    <i class="hsep"></i>
    <button aria-label="钢笔"><svg class="i24"><use href="#t-pen"/></svg></button>
    <button aria-label="铅笔"><svg class="i24"><use href="#t-pencil"/></svg></button>
    <button aria-label="书法"><svg class="i24"><use href="#t-call"/></svg></button>
    <button aria-label="文本"><svg class="i24"><use href="#t-text"/></svg></button>
    <i class="hsep"></i>
    <button aria-label="渐变"><svg class="i24"><use href="#t-grad"/></svg></button>
    <button aria-label="网格"><svg class="i24"><use href="#t-mesh"/></svg></button>
    <button aria-label="吸管"><svg class="i24"><use href="#t-drop"/></svg></button>
    <button aria-label="油漆桶"><svg class="i24"><use href="#t-buck"/></svg></button>
    <i class="hsep"></i>
    <button aria-label="微调"><svg class="i24"><use href="#t-tweak"/></svg></button>
    <button aria-label="喷涂"><svg class="i24"><use href="#t-spray"/></svg></button>
    <button aria-label="橡皮"><svg class="i24"><use href="#t-eras"/></svg></button>
    <button aria-label="连接"><svg class="i24"><use href="#t-conn"/></svg></button>
    <i class="hsep"></i>
    <button aria-label="缩放"><svg class="i24"><use href="#t-zoom"/></svg></button>
    <button aria-label="测量"><svg class="i24"><use href="#t-meas"/></svg></button>
  </aside>

  <section class="desk">
    <button class="corner" aria-label="锁定参考线"><svg class="i16"><use href="#lock"/></svg></button>
    <svg class="ruler hr" id="hruler"><path d="M778 12h10l-5 5z" fill="#8b8e8f"/></svg>
    <button class="corner" aria-label="画布"><svg class="i12"><path d="M3.500 3.500 6 1.500h3v9H6V5H3.500z" fill="#fff" stroke="#999"/></svg></button>
    <svg class="ruler vr" id="vruler"><path d="M12 63v9l5-4z" fill="#8b8e8f"/></svg>
    <svg class="canvas">
      <circle cx="509" cy="415" r="196.500" class="shape"/>
      <rect x="312.500" y="218.500" width="393" height="98" class="shape"/>
      <rect x="312.500" y="218.500" width="393" height="98" class="dash dark"/>
      <rect x="312.500" y="218.500" width="393" height="393" class="dash"/>
      <use href="#arr" width="14" height="14" transform="translate(307 212.500) rotate(45) translate(-7 -7)"/>
      <use href="#arr" width="14" height="14" transform="translate(508.500 212.500) rotate(90) translate(-7 -7)"/>
      <use href="#arr" width="14" height="14" transform="translate(711.500 212.500) rotate(-45) translate(-7 -7)"/>
      <use href="#arr" width="13" height="14" x="300" y="408.500"/>
      <use href="#arr" width="13" height="14" x="705" y="408.500"/>
      <use href="#arr" width="14" height="14" transform="translate(307 617) rotate(-45) translate(-7 -7)"/>
      <use href="#arr" width="14" height="14" transform="translate(508.500 617.500) rotate(90) translate(-7 -7)"/>
      <use href="#arr" width="14" height="14" transform="translate(711.500 617) rotate(45) translate(-7 -7)"/>
    </svg>
    <div class="vscroll"><i></i></div>
  </section>

  <aside class="dock">
    <header class="dt"><svg class="i16"><use href="#h-al"/></svg><h2>对齐和分散(A) (Shift+Ctrl+A)</h2><button aria-label="收起"><svg class="i12"><use href="#dk1"/></svg></button><button aria-label="关闭"><svg class="i12"><use href="#dk2"/></svg></button></header>
    <section class="align">
      <h3>对齐</h3>
      <div class="relrow">
        <button aria-label="作为组"><svg class="i24"><use href="#al0"/></svg></button>
        <span class="rel"><label for="rel">相对于：</label><span class="combo last"><select id="rel"><option>最近选区</option></select><svg class="tri"><use href="#tri"/></svg></span>
        <svg class="hl" viewBox="0 0 160 26" preserveAspectRatio="none"><path d="M0 1 24 2 32 4H105V2L128 3 160 1V22L112 24 78 26 30 24 0 22z"/></svg></span>
        <button class="cell" aria-label="移动对齐"><svg class="i24"><use href="#al00"/></svg></button>
      </div>
      <div class="grid">
        <button aria-label="右边对齐到锚点左侧"><svg class="i24"><use href="#al1"/></svg></button>
        <button aria-label="左对齐"><svg class="i24"><use href="#al2"/></svg></button>
        <button aria-label="水平居中"><svg class="i24"><use href="#al3"/></svg><svg class="hl" viewBox="0 0 34 30"><path d="M2 1H31V25L12 26V28H3z"/></svg></button>
        <button aria-label="右对齐"><svg class="i24 mx"><use href="#al2"/></svg></button>
        <button aria-label="左边对齐到锚点右侧"><svg class="i24 mx"><use href="#al1"/></svg></button>
        <button aria-label="文本锚点水平对齐"><svg class="i24"><use href="#tx1"/></svg></button>
        <button aria-label="底边对齐到锚点顶部"><svg class="i24"><use href="#av1"/></svg></button>
        <button aria-label="顶对齐"><svg class="i24"><use href="#av2"/></svg><svg class="hl" viewBox="0 0 34 30"><path d="M3 0 31 1V10L34 11V30L15 31V29L0 27V4H3z"/></svg></button>
        <button aria-label="垂直居中"><svg class="i24"><use href="#av3"/></svg></button>
        <button aria-label="底对齐"><svg class="i24 my"><use href="#av2"/></svg></button>
        <button aria-label="顶边对齐到锚点底部"><svg class="i24 my"><use href="#av1"/></svg></button>
        <button aria-label="文本基线对齐"><svg class="i24"><use href="#tx2"/></svg></button>
      </div>
      <h3>分布</h3>
      <div class="grid">
        <button class="c2" aria-label="左边等距"><svg class="i24"><use href="#di1"/></svg></button>
        <button aria-label="中心水平等距"><svg class="i24"><use href="#di2"/></svg></button>
        <button aria-label="右边等距"><svg class="i24"><use href="#di3"/></svg></button>
        <button aria-label="水平间距相等"><svg class="i24"><use href="#di4"/></svg></button>
        <button aria-label="文本水平分布"><svg class="i24"><use href="#tx3"/></svg></button>
        <button class="c2" aria-label="顶边等距"><svg class="i24 tp"><use href="#di1"/></svg></button>
        <button aria-label="中心垂直等距"><svg class="i24 tp"><use href="#di2"/></svg></button>
        <button aria-label="底边等距"><svg class="i24 tp"><use href="#di3"/></svg></button>
        <button aria-label="垂直间距相等"><svg class="i24 tp"><use href="#di4"/></svg></button>
        <button aria-label="文本垂直分布"><svg class="i24"><use href="#tx4"/></svg></button>
      </div>
      <h3>重新安排</h3>
      <div class="grid">
        <button aria-label="连接网络"><svg class="i24"><use href="#re1"/></svg></button>
        <button aria-label="按选择顺序交换"><svg class="i24"><use href="#re2"/></svg></button>
        <button aria-label="按堆叠顺序交换"><svg class="i24"><use href="#re3"/></svg></button>
        <button aria-label="顺时针交换"><svg class="i24"><use href="#re4"/></svg></button>
        <button aria-label="随机"><svg class="i24"><use href="#re5"/></svg></button>
        <button aria-label="散开"><svg class="i24"><use href="#re6"/></svg></button>
      </div>
      <h3>去除重叠</h3>
      <div class="ovrow">
        <label for="oh">H:</label>
        <span class="spin w88"><input id="oh" value="0.0"><button aria-label="减"><svg class="i12"><use href="#minus"/></svg></button><button aria-label="加"><svg class="i12"><use href="#plus"/></svg></button></span>
        <label for="ov">V:</label>
        <span class="spin w88"><input id="ov" value="0.0"><button aria-label="减"><svg class="i12"><use href="#minus"/></svg></button><button aria-label="加"><svg class="i12"><use href="#plus"/></svg></button></span>
        <button class="cell" aria-label="去除重叠"><svg class="i24"><use href="#ovl"/></svg></button>
      </div>
    </section>

    <header class="dt"><svg class="i16"><use href="#h-fi"/></svg><h2>填充和笔刷(F) (Shift+Ctrl+F)</h2><button aria-label="收起"><svg class="i12"><use href="#dk1"/></svg></button><button aria-label="关闭"><svg class="i12"><use href="#dk2"/></svg></button></header>
    <section class="fill">
      <div class="book">
        <div class="tabs">
          <button class="cur"><svg class="i16"><use href="#tb1"/></svg>填充(F)</button>
          <button><svg class="i16"><use href="#tb2"/></svg>笔刷绘制(P)</button>
          <button><svg class="i16"><use href="#tb3"/></svg>笔刷样式(Y)</button>
        </div>
        <div class="page">
          <div class="types">
            <button aria-label="无"><svg class="i16"><use href="#f0"/></svg></button>
            <button class="on" aria-label="平面"><svg class="i16"><use href="#f1"/></svg></button>
            <button aria-label="线性渐变"><svg class="i16"><use href="#f2"/></svg></button>
            <button aria-label="径向渐变"><svg class="i16"><use href="#f3"/></svg></button>
            <button aria-label="网格渐变"><svg class="i16"><use href="#f4"/></svg></button>
            <button aria-label="图案"><svg class="i16"><use href="#f5"/></svg></button>
            <button aria-label="色样"><svg class="i16"><use href="#f6"/></svg></button>
            <button aria-label="未设置"><svg class="i16"><use href="#f7"/></svg></button>
            <button class="end" aria-label="奇偶"><svg class="i16"><use href="#f8"/></svg></button>
            <button class="on" aria-label="非零"><svg class="i16"><use href="#f9"/></svg></button>
          </div>
          <h3>平面颜色</h3>
          <div class="modes"><button class="on">RGB</button><button>HSL</button><button>HSV</button><button>CMYK</button><button>色盘</button><button>CMS</button></div>
          <div class="sliders">
            <label for="r">R:</label><span class="track red"><input type="range" min="0" max="255" value="0" aria-label="R"></span><span class="spin"><input id="r" value="0"><button class="off" aria-label="减"><svg class="i12"><use href="#minus"/></svg></button><button aria-label="加"><svg class="i12"><use href="#plus"/></svg></button></span>
            <label for="g">G:</label><span class="track green"><input type="range" min="0" max="255" value="126" aria-label="G"></span><span class="spin"><input id="g" value="128"><button aria-label="减"><svg class="i12"><use href="#minus"/></svg></button><button aria-label="加"><svg class="i12"><use href="#plus"/></svg></button></span>
            <label for="b">B:</label><span class="track blue"><input type="range" min="0" max="255" value="126" aria-label="B"></span><span class="spin"><input id="b" value="128"><button aria-label="减"><svg class="i12"><use href="#minus"/></svg></button><button aria-label="加"><svg class="i12"><use href="#plus"/></svg></button></span>
            <label for="a">A:</label><span class="track alpha"><input type="range" min="0" max="100" value="100" aria-label="A"></span><span class="spin"><input id="a" value="100"><button aria-label="减"><svg class="i12"><use href="#minus"/></svg></button><button class="off" aria-label="加"><svg class="i12"><use href="#plus"/></svg></button></span>
          </div>
          <div class="hex">
            <button aria-label="色彩管理"><svg class="i16"><use href="#c1"/></svg></button>
            <button aria-label="超出色域"><svg class="i16"><use href="#c2"/></svg></button>
            <button class="pick" aria-label="拾取颜色"><svg class="i16"><use href="#t-drop"/></svg></button>
            <label for="rgba">RGBA(:):</label><input id="rgba" value="008080ff">
          </div>
        </div>
      </div>
    </section>
  </aside>

  <aside class="bar">
    <button aria-label="新建"><svg class="i16"><use href="#m-new"/></svg></button>
    <button aria-label="打开"><svg class="i16"><use href="#m-open"/></svg></button>
    <button aria-label="保存"><svg class="i16"><use href="#m-save"/></svg></button>
    <button aria-label="打印"><svg class="i16"><use href="#m-prn"/></svg></button>
    <i class="hsep"></i>
    <button aria-label="导入"><svg class="i16"><use href="#m-imp"/></svg></button>
    <button aria-label="导出"><svg class="i16"><use href="#m-exp"/></svg></button>
    <i class="hsep"></i>
    <button aria-label="撤销"><svg class="i16"><use href="#m-undo"/></svg></button>
    <button aria-label="重做"><svg class="i16"><use href="#m-redo"/></svg></button>
    <i class="hsep"></i>
    <button aria-label="复制"><svg class="i16"><use href="#m-copy"/></svg></button>
    <button aria-label="剪切"><svg class="i16"><use href="#m-cut"/></svg></button>
    <button aria-label="粘贴"><svg class="i16"><use href="#m-paste"/></svg></button>
    <i class="hsep"></i>
    <button aria-label="缩放选区"><svg class="i16"><use href="#m-z1"/></svg></button>
    <button aria-label="缩放绘图"><svg class="i16"><use href="#m-z2"/></svg></button>
    <button aria-label="缩放页面"><svg class="i16"><use href="#m-z3"/></svg></button>
    <button aria-label="页宽"><svg class="i16"><use href="#m-z4"/></svg></button>
    <i class="hsep"></i>
    <button aria-label="再制"><svg class="i16"><use href="#m-dup"/></svg></button>
    <button aria-label="克隆"><svg class="i16"><use href="#m-cl"/></svg></button>
    <button aria-label="断开克隆"><svg class="i16"><use href="#m-uc"/></svg></button>
    <i class="hsep"></i>
    <button aria-label="群组"><svg class="i16"><use href="#m-gr"/></svg></button>
    <button aria-label="解组"><svg class="i16"><use href="#m-ug"/></svg></button>
  </aside>
  <aside class="bar">
    <button class="on" aria-label="启用吸附"><svg class="i16"><use href="#s-main"/></svg></button>
    <i class="hsep"></i>
    <button aria-label="吸附边界框"><svg class="i16"><use href="#s-main"/></svg></button>
    <button aria-label="边界框边"><svg class="i16"><use href="#s-b1"/></svg></button>
    <button aria-label="边界框角"><svg class="i16"><use href="#s-b2"/></svg></button>
    <button aria-label="边中点"><svg class="i16"><use href="#s-b3"/></svg></button>
    <button aria-label="框中心"><svg class="i16"><use href="#s-b4"/></svg></button>
    <i class="hsep"></i>
    <button class="on" aria-label="吸附节点"><svg class="i16"><use href="#s-main"/></svg></button>
    <button aria-label="吸附路径"><svg class="i16"><use href="#s-p"/></svg></button>
    <button aria-label="路径交点"><svg class="i16"><use href="#s-x"/></svg></button>
    <button class="on" aria-label="尖锐节点"><svg class="i16"><use href="#s-c"/></svg></button>
    <button aria-label="平滑节点"><svg class="i16"><use href="#s-s"/></svg></button>
    <button aria-label="线段中点"><svg class="i16"><use href="#s-m"/></svg></button>
    <i class="hsep"></i>
    <button class="on" aria-label="吸附其他点"><svg class="i16"><use href="#s-main"/></svg></button>
    <button aria-label="对象中心"><svg class="i16"><use href="#s-o"/></svg></button>
    <button aria-label="旋转中心"><svg class="i16"><use href="#s-r"/></svg></button>
    <button aria-label="文本锚点"><svg class="i16"><use href="#s-t"/></svg></button>
    <i class="hsep"></i>
    <button aria-label="页面边框"><svg class="i16"><use href="#s-pg"/></svg></button>
    <button class="on" aria-label="网格吸附"><svg class="i16"><use href="#s-g"/></svg></button>
    <button class="on" aria-label="参考线吸附"><svg class="i16"><use href="#s-l"/></svg></button>
  </aside>
</main>
<script src="ruler.js"></script>
</body>
</html>
```
FILE: ruler.js
```js
const NS = 'http://www.w3.org/2000/svg';
const STEP = 9.83;

function add(svg, name, attrs, text) {
  const el = document.createElementNS(NS, name);
  for (const key in attrs) el.setAttribute(key, attrs[key]);
  if (text) el.textContent = text;
  svg.appendChild(el);
}

// Ticks every 10 units; zero is the offset of the origin along the ruler.
function draw(svg, zero, vertical) {
  const length = vertical ? svg.clientHeight : svg.clientWidth;
  const first = Math.ceil(-zero / STEP);
  const last = Math.floor((length - zero) / STEP);
  let d = '';
  for (let i = first; i <= last; i++) {
    const p = Math.floor(zero + i * STEP) + 0.5;
    const start = i % 10 === 0 ? 0 : i % 5 === 0 ? 8 : 12;
    d += vertical ? `M${start} ${p}H18` : `M${p} ${start}V18`;
    if (i % 10 !== 0) continue;
    const label = String(i * 10);
    if (!vertical) {
      add(svg, 'text', { x: p + 3, y: 13 }, label);
      continue;
    }
    let y = p + 1;
    for (const ch of label) {
      y += ch === '-' ? 11 : 12;
      add(svg, 'text', { x: 8, y, 'text-anchor': 'middle' }, ch);
    }
  }
  d += vertical ? `M17.5 0V${length}` : `M0 17.5H${length}`;
  add(svg, 'path', { d, class: 'ticks' });
}

draw(document.getElementById('hruler'), 445.7, false);
draw(document.getElementById('vruler'), 279.3, true);
```
FILE: styles.css
```css
* { box-sizing: border-box; }
body {
  margin: 0;
  height: 100vh;
  display: flex;
  flex-direction: column;
  overflow: hidden;
  background: #f6f5f4;
  color: #8b8e8f;
  font: 15px/20px "Noto Sans", "Noto Sans CJK SC", sans-serif;
}
button, input, select { font: inherit; color: inherit; margin: 0; }
button { border: 0; padding: 0; background: none; display: flex; align-items: center; justify-content: center; position: relative; }
h1, h2, h3 { margin: 0; font: inherit; }
svg { display: block; flex: none; overflow: visible; }
.sprite { position: absolute; width: 0; height: 0; }
.i12 { width: 12px; height: 12px; }
.i16 { width: 16px; height: 16px; }
.i20 { width: 20px; height: 20px; }
.i24 { width: 24px; height: 24px; }
.mx { transform: scaleX(-1); }
.my { transform: scaleY(-1); }
.rot { transform: rotate(90deg); }
.tp { transform: matrix(0, 1, 1, 0, 0, 0); }
.n { fill: none; }
.k { fill: none; stroke: #000; }
.s { fill: none; stroke: currentColor; stroke-width: 2; }
.b { fill: url(#gb); stroke: #1c2632; }
.r { fill: none; stroke: #d40000; }
.y { fill: url(#gy); stroke: #2a2000; }
.glyphA { font: 900 25px "DejaVu Sans", sans-serif; fill: #111; }
.glyphS { font: 900 16px "DejaVu Sans", sans-serif; fill: #111; }
.ga { font: 700 14px "DejaVu Sans", sans-serif; fill: #46698f; }
.gy { font: italic 700 23px "Liberation Serif", serif; fill: #000; }

.titlebar { height: 28px; background: #fff; color: #000; display: flex; justify-content: space-between; align-items: flex-start; font-family: "Open Sans", "Noto Sans CJK SC", sans-serif; }
.title { display: flex; align-items: center; gap: 5px; padding-left: 3px; height: 20px; }
.wm { display: flex; align-items: center; height: 18px; }
.wm button { width: 58px; }
.wm button:last-child { width: 56px; }

.menubar { height: 28px; display: flex; gap: 1px; border-bottom: 1px solid #dbd9d7; }
.menubar button { padding: 0 8px; }
.menubar button:first-child { padding-left: 2px; }

.toolbar { height: 42px; display: flex; align-items: center; margin-left: -2px; white-space: nowrap; }
.tb { width: 36px; height: 34px; margin-right: 1px; border-radius: 5px; flex: none; }
.on { background: #e3e3df; border: 1px solid #cfcdc9; border-radius: 5px; }
.vsep { width: 1px; height: 34px; margin: 0 6px 0 7px; background: #d9d7d5; }
.fl { width: 34px; padding-left: 7px; }
.vsep + .fl { width: 31px; padding-left: 3px; }
.fl.wide { width: 40px; }
.lk { margin-left: 4px; }
.lk + .fl { width: 36px; padding-left: 3px; }
.spin { display: flex; height: 34px; border: 1px solid #d2cfcb; border-radius: 5px; background: #fcfcfc; overflow: hidden; }
.spin input { flex: 1; width: 0; min-width: 0; border: 0; padding: 0 0 0 2px; background: none; color: #2e3436; outline: 0; }
.spin button { width: 17px; border-left: 1px solid #ececea; }
.spin .off { color: #e6e6e6; }
.w128 { width: 128px; }
.w123 { width: 123px; }
.w88 { width: 88px; }
.combo { display: flex; position: relative; height: 34px; }
.combo select { width: 100%; appearance: none; border: 1px solid #d2cfcb; border-radius: 5px; padding: 0 10px; background: none; }
.combo .tri { position: absolute; right: 13px; top: 14px; width: 10px; height: 6px; }
.unit { width: 69px; margin-left: 4px; }

.work { flex: 1; min-height: 0; display: grid; grid-template-columns: 46px minmax(0, 1fr) 394px 44px 37px; grid-template-rows: 100%; }
.tools { width: 41px; padding-top: 3px; }
.tools button { width: 41px; height: 34px; padding-right: 3px; }
.tools .on { height: 34px; border-left: 0; border-radius: 0 5px 5px 0; }
.hsep { display: block; height: 1px; margin: 7px 0 6px; background: #d9d7d5; }

.desk { display: grid; grid-template-columns: 18px minmax(0, 1fr) 18px; grid-template-rows: 18px minmax(0, 1fr); }
.corner { width: 17px; height: 17px; border: 1px solid #b5b3b0; border-radius: 3px; background: #f4f3f2; }
.ruler { width: 100%; height: 100%; overflow: hidden; font-size: 12px; fill: #829fb8; }
.hr { font-size: 13px; }
.ticks { fill: none; stroke: #8b8e8f; }
.canvas { width: 100%; height: 100%; background: #fff; overflow: hidden; fill: #000; }
.shape { fill: #008080; fill-opacity: .5; }
.dash { fill: none; stroke: #5555c8; stroke-dasharray: 4 4; }
.dark { stroke: #1616a8; }
.vscroll { background: #ededec; padding: 3px 6px 0; }
.vscroll i { display: block; height: 100%; border-radius: 3px 3px 0 0; background: #cfcfcf; }

.dock { width: 389px; border-left: 1px solid #d5d0cc; display: flex; flex-direction: column; overflow: hidden; }
.dt { height: 34px; flex: none; display: flex; align-items: center; }
.dt h2 { flex: 1; padding-left: 1px; color: #76919e; }
.dt button { width: 36px; height: 24px; align-self: flex-start; }
h3 { font-weight: 500; height: 26px; line-height: 25px; padding-left: 4px; }
.align { flex: none; border: 1px solid #d5d0cc; border-bottom-width: 2px; border-left: 0; padding-bottom: 3px; }
.relrow, .ovrow { height: 34px; display: flex; align-items: center; justify-content: flex-end; padding-right: 3px; }
.relrow > button:first-child { margin-right: auto; margin-left: 22px; }
.cell { width: 44px; height: 34px; }
.rel { position: relative; display: flex; align-items: center; }
.rel label { width: 61px; }
.combo.last { width: 99px; }
.hl { position: absolute; mix-blend-mode: multiply; fill: #ffff00; pointer-events: none; }
.rel .hl { left: -3px; top: 4px; width: 160px; height: 26px; }
.grid .hl { left: 5px; top: 0; width: 34px; height: 30px; }
.grid { display: grid; grid-template-columns: repeat(6, 44px); grid-auto-rows: 34px; justify-content: end; padding: 0 3px 1px 0; }
.c2 { grid-column: 2; }
.ovrow label { width: 30px; }
.ovrow .spin + label { padding-left: 3px; width: 31px; }
.ovrow .cell { margin-left: 3px; }

.fill { flex: 1; min-height: 0; border: 1px solid #d5d0cc; border-width: 1px 1px 0 0; padding: 3px 3px 0 4px; }
.book { height: 100%; border: 1px solid #d2cfcb; border-bottom: 0; background: #fcfcfc; }
.tabs { height: 37px; display: flex; gap: 10px; padding-left: 8px; background: #e9e8e7; border-bottom: 1px solid #d2cfcb; font-weight: 700; color: #b9bab9; }
.tabs button { gap: 4px; padding: 0 12px 2px; white-space: nowrap; }
.tabs .cur { color: #8b8e8f; border-bottom: 3px solid #3584e4; padding: 1px 12px 0; }
.page { padding: 8px 8px 0; }
.types { display: flex; }
.types button { width: 36px; height: 34px; }
.types .end { margin-left: auto; }
.page h3 { height: 32px; line-height: 34px; padding: 0; }
.modes { display: grid; grid-template-columns: repeat(6, minmax(0, 1fr)); gap: 2px; }
.modes button { height: 34px; border: 1px solid #d2cfcb; border-radius: 5px; background: #f6f5f4; }
.modes .on { background: #e3e3df; }
.sliders { display: grid; grid-template-columns: 42px minmax(0, 1fr) 68px; row-gap: 2px; padding: 3px 8px 0 0; align-items: center; }
.sliders label { padding-left: 8px; }
.track { height: 34px; margin-right: 8px; overflow: hidden; display: block; }
.track input { appearance: none; display: block; width: calc(100% + 10px); height: 34px; margin: 0 -5px; background: none; }
.track input::-webkit-slider-thumb {
  appearance: none; width: 10px; height: 34px; border: 0;
  background: url("data:image/svg+xml,%3Csvg xmlns='http://www.w3.org/2000/svg' width='10' height='34'%3E%3Cpath d='M1 0h8L5 4zM1 34h8L5 30z' stroke='%23ddd'/%3E%3C/svg%3E");
}
.red { background: linear-gradient(90deg, #008080, #ff8080); }
.green { background: linear-gradient(90deg, #000080, #008080, #00ff80); }
.blue { background: linear-gradient(90deg, #008000, #008080, #0080ff); }
.alpha { background: linear-gradient(90deg, #00808000, #008080), repeating-conic-gradient(#5e5e5e 0 25%, #a0a0a0 0 50%) 0 0 / 16px 16px; }
.hex { display: flex; align-items: center; padding-top: 39px; }
.hex button { width: 20px; height: 34px; }
.hex .pick { margin-left: 11px; }
.hex label { margin-left: auto; padding-right: 11px; }
.hex input { width: 90px; height: 34px; border: 1px solid #d2cfcb; border-radius: 5px; background: #fcfcfc; color: #2e3436; padding: 0 8px; }

.bar { width: 36px; padding-top: 4px; }
.bar button { width: 36px; height: 34px; margin-bottom: 1px; }
.bar .hsep { margin: 7px 0; }
```
